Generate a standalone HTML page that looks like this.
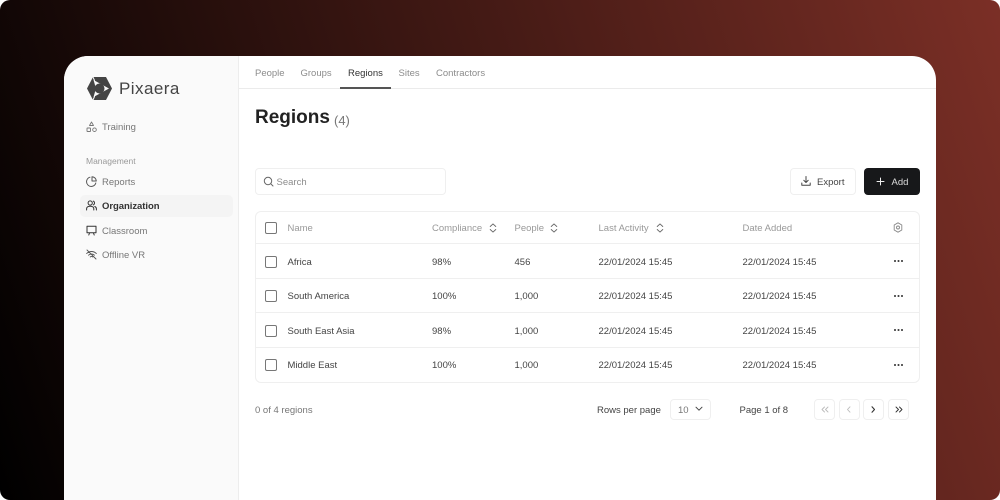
<!DOCTYPE html>
<html><head><meta charset="utf-8"><style>
html,body{margin:0;padding:0;width:1000px;height:500px;overflow:hidden;background:#fff}
body{position:relative;font-family:"Liberation Sans",sans-serif}
#w{position:absolute;left:0;top:0;width:1000px;height:500px;overflow:hidden;border-radius:10px;background:linear-gradient(72deg,#000 0%,#7b2f26 100%)}
.a{position:absolute;white-space:nowrap}
.t{position:absolute;white-space:nowrap;font-size:9.5px;line-height:12px;color:#444;transform:translateY(1px)}
.g{color:#999}.s{color:#777}
svg{position:absolute;fill:none;stroke-linecap:round;stroke-linejoin:round}
.cb{position:absolute;left:265px;width:10px;height:10px;border:1.2px solid #777;border-radius:2px;background:#fff}
.ln{position:absolute;left:256px;width:663px;height:1px;background:#efefef}
.dots{position:absolute;left:893.5px;width:9px;height:2px;background:radial-gradient(circle at 1px 1px,#444 1px,transparent 1.1px) 0 0/3.5px 2px repeat-x}
.pb{position:absolute;top:399px;width:19px;height:19px;border:1px solid #efefef;border-radius:4px;background:#fff}
</style></head><body><div id="w">
<div class="a" style="left:64px;top:56px;width:872px;height:444px;background:#fff;border-radius:24px 24px 0 0;overflow:hidden">
<div class="a" style="left:0;top:0;width:174px;height:444px;background:#fafafa;border-right:1px solid #ededed"></div>
</div>
<div class="a" style="left:239px;top:88px;width:697px;height:1px;background:#ebebeb"></div>
<div class="a" style="left:340px;top:87px;width:51px;height:2px;background:#555"></div>

<svg style="left:87px;top:77px" width="25" height="23" viewBox="0 0 25 23"><path d="M6 0H19L25 11.500 19 23H6L0 11.500Z" fill="#444"/><path d="M6.500 3 22 11.500 6.500 20 9 11.500Z" fill="#fafafa"/><path d="M6 0 7.500 3.500M6 23 7.500 19.500" stroke="#fafafa" stroke-width="1"/><circle cx="12.500" cy="11.500" r="5" fill="#444"/></svg>
<div class="a" style="left:119px;top:79px;font-size:17px;line-height:20px;color:#444;letter-spacing:.45px">Pixaera</div>

<svg style="left:86px;top:121px" width="11" height="12" viewBox="0 0 11 12" stroke="#777" stroke-width=".9"><path d="M5.500 1 7.500 4.500H3.500Z"/><rect x="1" y="7" width="3.500" height="3.500" rx=".5"/><circle cx="8.500" cy="8.700" r="1.800"/></svg>
<div class="t s" style="left:102px;top:121px">Training</div>
<div class="t g" style="left:86px;top:154px;font-size:8.500px">Management</div>
<svg style="left:86px;top:176px" width="11" height="11" viewBox="0 0 11 11" stroke="#555" stroke-width="1"><path d="M9.800 7A4.700 4.700 0 1 1 4 1.200"/><path d="M6 .7A4.500 4.500 0 0 1 10.300 5H6Z"/></svg>
<div class="t s" style="left:102px;top:176px">Reports</div>
<div class="a" style="left:80px;top:195px;width:153px;height:22px;background:#f4f4f4;border-radius:5px"></div>
<svg style="left:86px;top:200px" width="11" height="11" viewBox="0 0 11 11" stroke="#333" stroke-width="1"><circle cx="4.200" cy="3" r="2.100"/><path d="M.6 10V8.800C.6 7.200 2 6.300 4.200 6.300S7.800 7.200 7.800 8.800V10"/><path d="M7.300 1.100A2.100 2.100 0 0 1 7.300 4.900M8.800 6.500C9.800 7 10.400 7.800 10.400 8.800V10"/></svg>
<div class="t" style="left:102px;top:200px;font-weight:bold;color:#333;letter-spacing:-.05px">Organization</div>
<svg style="left:86px;top:225px" width="11" height="11" viewBox="0 0 11 11" stroke="#333" stroke-width="1"><path d="M1 1.300H10V7.800H1Z"/><path d="M3.500 8 2.800 10M7.500 8 8.200 10"/></svg>
<div class="t s" style="left:102px;top:225px">Classroom</div>
<svg style="left:86px;top:249px" width="11" height="11" viewBox="0 0 11 11" stroke="#555" stroke-width=".9"><path d="M1 1 10 10M.7 4.500C2 3.200 3.500 2.500 5.500 2.500S9 3.200 10.300 4.500M2.500 6.200C3.300 5.500 4.300 5 5.500 5S7.700 5.500 8.500 6.200M4.200 8C4.900 7.400 6.100 7.400 6.800 8"/></svg>
<div class="t s" style="left:102px;top:249px">Offline VR</div>

<div class="t g" style="left:255px;top:67px;color:#8c8c8c">People</div>
<div class="t g" style="left:300.500px;top:67px;color:#8c8c8c">Groups</div>
<div class="t" style="left:348px;top:67px;color:#333">Regions</div>
<div class="t g" style="left:398.500px;top:67px;color:#8c8c8c">Sites</div>
<div class="t g" style="left:436px;top:67px;color:#8c8c8c">Contractors</div>

<div class="a" style="left:255px;top:105px;font-size:19px;line-height:26px;font-weight:bold;color:#222">Regions</div>
<div class="a" style="left:334px;top:113px;font-size:13px;line-height:15px;color:#777">(4)</div>

<div class="a" style="left:255px;top:168px;width:189px;height:25px;border:1px solid #efefef;border-radius:4px;background:#fff"></div>
<svg style="left:263px;top:176px" width="11" height="11" viewBox="0 0 11 11" stroke="#666" stroke-width="1"><circle cx="5" cy="5" r="3.700"/><path d="M7.700 7.700 10 10"/></svg>
<div class="t g" style="left:276.500px;top:176px;color:#8c8c8c">Search</div>

<div class="a" style="left:790px;top:168px;width:64px;height:25px;border:1px solid #efefef;border-radius:4px;background:#fff"></div>
<svg style="left:800px;top:175px" width="12" height="12" viewBox="0 0 12 12" stroke="#444" stroke-width="1"><path d="M6 1.500V7.500M3.800 5.300 6 7.500 8.200 5.300M1.800 8V10.300H10.200V8"/></svg>
<div class="t" style="left:817px;top:176px">Export</div>
<div class="a" style="left:864px;top:168px;width:56px;height:27px;background:#17181a;border-radius:4px"></div>
<svg style="left:875px;top:176px" width="11" height="11" viewBox="0 0 11 11" stroke="#eee" stroke-width="1"><path d="M5.500 2V9M2 5.500H9"/></svg>
<div class="t" style="left:891.500px;top:176px;color:#ddd">Add</div>

<div class="a" style="left:255px;top:211px;width:663px;height:170px;border:1px solid #efefef;border-radius:6px;background:#fff"></div>
<div class="ln" style="top:243px"></div><div class="ln" style="top:278px"></div><div class="ln" style="top:312px"></div><div class="ln" style="top:347px"></div>

<div class="cb" style="top:222px"></div><div class="cb" style="top:256px"></div><div class="cb" style="top:290px"></div><div class="cb" style="top:325px"></div><div class="cb" style="top:359px"></div>

<div class="t g" style="left:287.500px;top:222px">Name</div>
<div class="t g" style="left:432px;top:222px">Compliance</div>
<div class="t g" style="left:514.500px;top:222px">People</div>
<div class="t g" style="left:598.500px;top:222px">Last Activity</div>
<div class="t g" style="left:742.500px;top:222px">Date Added</div>
<svg style="left:489px;top:223px" width="8" height="10" viewBox="0 0 8 10" stroke="#666" stroke-width=".9"><path d="M1.200 3.500 4 .9 6.800 3.500M1.200 6.500 4 9.100 6.800 6.500"/></svg>
<svg style="left:550px;top:223px" width="8" height="10" viewBox="0 0 8 10" stroke="#666" stroke-width=".9"><path d="M1.200 3.500 4 .9 6.800 3.500M1.200 6.500 4 9.100 6.800 6.500"/></svg>
<svg style="left:656px;top:223px" width="8" height="10" viewBox="0 0 8 10" stroke="#666" stroke-width=".9"><path d="M1.200 3.500 4 .9 6.800 3.500M1.200 6.500 4 9.100 6.800 6.500"/></svg>
<svg style="left:893px;top:222px" width="10" height="11" viewBox="0 0 10 11" stroke="#888" stroke-width=".9"><path d="M5 .8 8.800 3V8L5 10.200 1.200 8V3Z"/><circle cx="5" cy="5.500" r="1.500"/></svg>

<div class="t" style="left:287.500px;top:256px">Africa</div>
<div class="t" style="left:432px;top:256px">98%</div><div class="t" style="left:514.500px;top:256px">456</div>
<div class="t" style="left:598.500px;top:256px">22/01/2024 15:45</div><div class="t" style="left:742.500px;top:256px">22/01/2024 15:45</div>
<div class="dots" style="top:260px"></div>

<div class="t" style="left:287.500px;top:290px">South America</div>
<div class="t" style="left:432px;top:290px">100%</div><div class="t" style="left:514.500px;top:290px">1,000</div>
<div class="t" style="left:598.500px;top:290px">22/01/2024 15:45</div><div class="t" style="left:742.500px;top:290px">22/01/2024 15:45</div>
<div class="dots" style="top:295px"></div>

<div class="t" style="left:287.500px;top:325px">South East Asia</div>
<div class="t" style="left:432px;top:325px">98%</div><div class="t" style="left:514.500px;top:325px">1,000</div>
<div class="t" style="left:598.500px;top:325px">22/01/2024 15:45</div><div class="t" style="left:742.500px;top:325px">22/01/2024 15:45</div>
<div class="dots" style="top:329px"></div>

<div class="t" style="left:287.500px;top:359px">Middle East</div>
<div class="t" style="left:432px;top:359px">100%</div><div class="t" style="left:514.500px;top:359px">1,000</div>
<div class="t" style="left:598.500px;top:359px">22/01/2024 15:45</div><div class="t" style="left:742.500px;top:359px">22/01/2024 15:45</div>
<div class="dots" style="top:364px"></div>

<div class="t s" style="left:255px;top:404px">0 of 4 regions</div>
<div class="t" style="left:597px;top:404px">Rows per page</div>
<div class="a" style="left:670px;top:399px;width:39px;height:19px;border:1px solid #efefef;border-radius:4px;background:#fff"></div>
<div class="t s" style="left:678px;top:404px">10</div>
<svg style="left:695px;top:406px" width="8" height="6" viewBox="0 0 8 6" stroke="#444" stroke-width="1"><path d="M1 1.200 4 4.200 7 1.200"/></svg>
<div class="t" style="left:739.500px;top:404px">Page 1 of 8</div>
<div class="pb" style="left:814px"></div><div class="pb" style="left:839px"></div><div class="pb" style="left:863px"></div><div class="pb" style="left:888px"></div>
<svg style="left:821px;top:406px" width="8" height="7" viewBox="0 0 8 7" stroke="#bbb" stroke-width=".9"><path d="M3.500 1 1 3.500 3.500 6M7 1 4.500 3.500 7 6"/></svg>
<svg style="left:846px;top:406px" width="6" height="7" viewBox="0 0 6 7" stroke="#bbb" stroke-width=".9"><path d="M4 .8 1.500 3.500 4 6.200"/></svg>
<svg style="left:870px;top:406px" width="6" height="7" viewBox="0 0 6 7" stroke="#333" stroke-width="1.100"><path d="M2 .8 4.500 3.500 2 6.200"/></svg>
<svg style="left:895px;top:406px" width="8" height="7" viewBox="0 0 8 7" stroke="#333" stroke-width=".9"><path d="M1 1 3.500 3.500 1 6M4.500 1 7 3.500 4.500 6"/></svg>
</div></body></html>
